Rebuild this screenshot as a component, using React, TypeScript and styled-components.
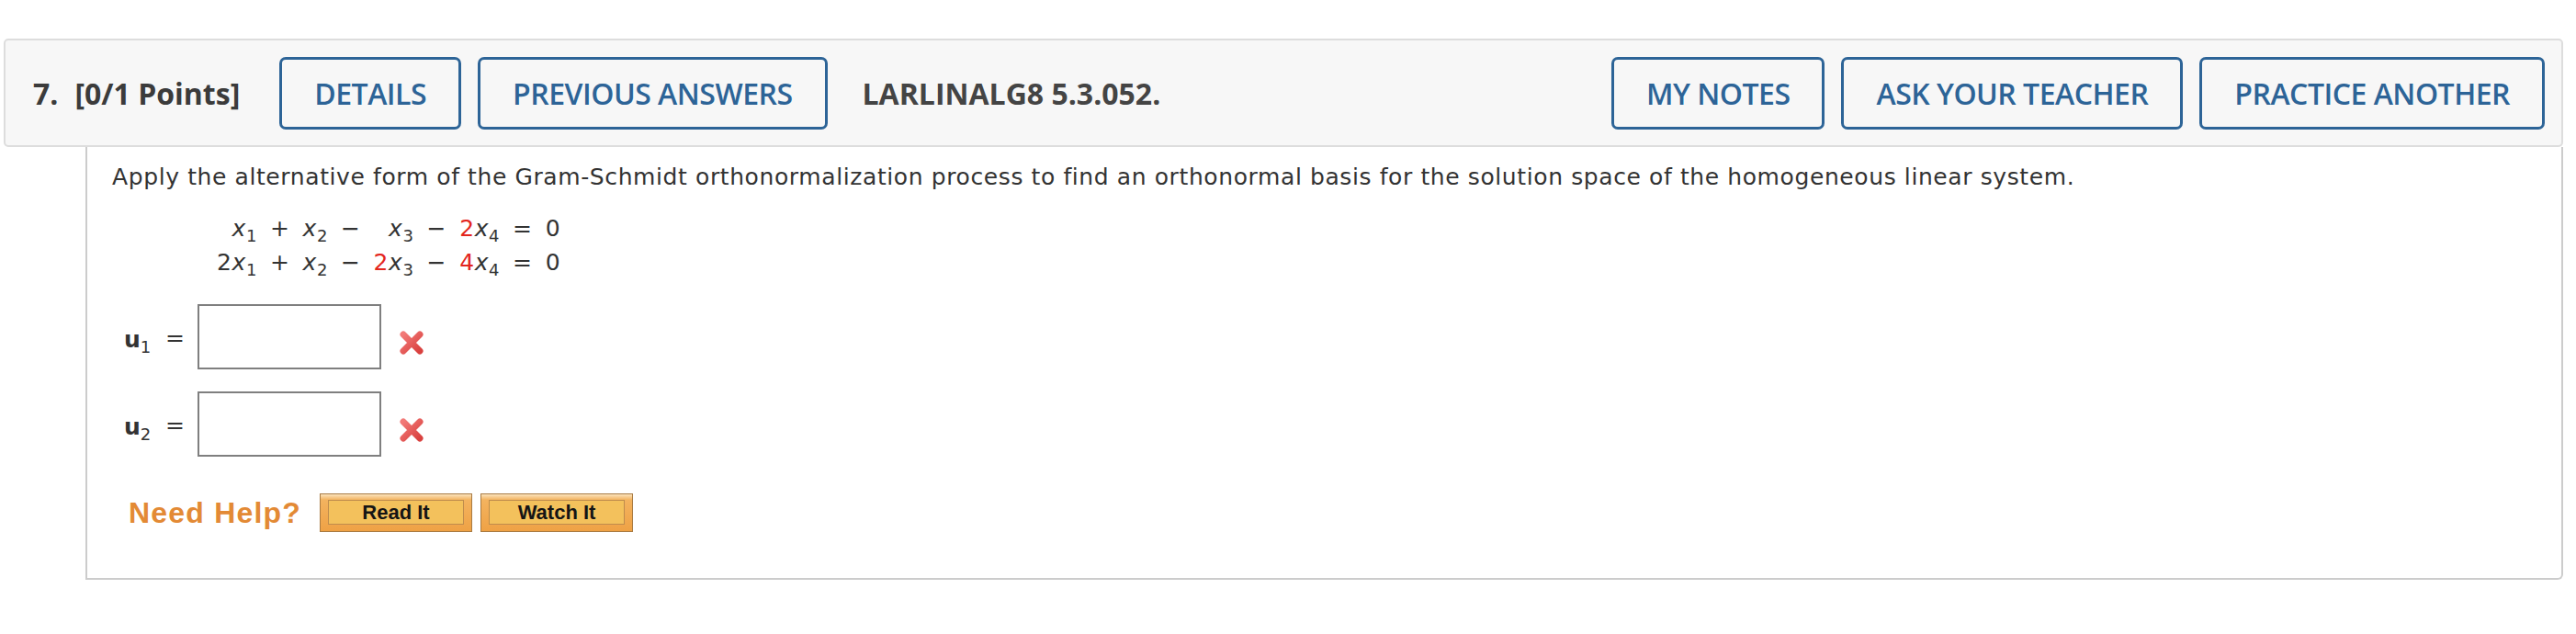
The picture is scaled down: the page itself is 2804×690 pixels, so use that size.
import styled, { createGlobalStyle } from "styled-components";

const GlobalStyle = createGlobalStyle`
  html, body {
    margin: 0;
    padding: 0;
    background: #ffffff;
  }
  body {
    font-family: "DejaVu Sans", Verdana, sans-serif;
    color: #333333;
  }
`;

const Question = styled.section`
  margin: 42px 14px 0 4px;
  display: flex;
  flex-direction: column;
`;

const Header = styled.header`
  box-sizing: border-box;
  height: 118px;
  display: flex;
  align-items: center;
  gap: 18px;
  padding: 0 18px 0 30px;
  background: #f7f7f7;
  border: 2px solid #dddddd;
  border-radius: 5px;
  font-family: "Open Sans", "Liberation Sans", sans-serif;
`;

const Title = styled.div`
  display: flex;
  align-items: center;
  gap: 18px;
  margin-right: 25px;
  font-size: 32px;
  font-weight: 700;
  color: #3b3b3b;
  white-space: nowrap;
`;

const HeaderButton = styled.button`
  box-sizing: border-box;
  height: 79px;
  padding: 0 35px;
  background: transparent;
  border: 3px solid #2d6497;
  border-radius: 7px;
  color: #2d6497;
  font-family: "Open Sans", "Liberation Sans", sans-serif;
  font-size: 32px;
  font-weight: 600;
  letter-spacing: -0.5px;
  white-space: nowrap;
  cursor: pointer;
`;

const Code = styled.div`
  margin-left: 20px;
  font-size: 32px;
  font-weight: 700;
  color: #444444;
  white-space: nowrap;
`;

const Spacer = styled.div`
  flex: 1;
`;

const Body = styled.div`
  margin-left: 89px;
  padding: 16px 0 50px 27px;
  border: 2px solid #cccccc;
  border-top: none;
  border-radius: 0 0 6px 0;
  font-size: 25px;
  letter-spacing: 0.6px;
  color: #333333;
`;

const Prompt = styled.p`
  margin: 0;
  line-height: 34px;
`;

const System = styled.div`
  display: grid;
  grid-template-columns: repeat(9, auto);
  justify-content: start;
  justify-items: end;
  column-gap: 14px;
  margin: 20px 0 0 114px;
  line-height: 37px;
  white-space: nowrap;
`;

const Term = styled.span``;

const Op = styled.span`
  justify-self: center;
`;

const Var = styled.i`
  font-style: italic;
`;

const Sub = styled.sub`
  font-size: 0.72em;
  vertical-align: -0.32em;
  line-height: 0;
  font-style: normal;
`;

const Coef = styled.span<{ $red?: boolean }>`
  color: ${(p) => (p.$red ? "#e3261d" : "inherit")};
`;

const AnswerRow = styled.div<{ $first?: boolean }>`
  display: flex;
  align-items: center;
  margin-top: ${(p) => (p.$first ? "27px" : "24px")};
  padding-left: 13px;
`;

const Label = styled.span`
  width: 30px;
  margin-top: 5px;
  font-weight: 700;
  letter-spacing: 0;
  white-space: nowrap;
  sub {
    font-weight: 400;
  }
`;

const Equals = styled.span`
  margin: 2px 13px 0 15px;
`;

const AnswerBox = styled.input`
  box-sizing: border-box;
  width: 200px;
  height: 71px;
  margin: 0;
  border: 2px solid #7f7f7f;
  border-radius: 0;
  background: #ffffff;
  outline: none;
`;

const Mark = styled.svg`
  width: 28px;
  height: 28px;
  margin: 12px 0 0 19px;
`;

const HelpRow = styled.div`
  display: flex;
  align-items: center;
  margin-top: 40px;
  padding-left: 18px;
`;

const NeedHelp = styled.span`
  margin-right: 20px;
  font-family: "Liberation Sans", Arial, sans-serif;
  font-size: 32px;
  font-weight: 700;
  color: #e38a35;
  letter-spacing: 1.2px;
`;

const HelpButton = styled.button`
  box-sizing: border-box;
  width: 166px;
  height: 42px;
  margin-right: 9px;
  padding: 6px 8px 7px;
  display: flex;
  background: linear-gradient(#fbe3bd 0px, #f3b35f 6px, #efa245 100%);
  border: 1px solid #a87a42;
  cursor: pointer;
`;

const HelpLabel = styled.span`
  flex: 1;
  display: flex;
  align-items: center;
  justify-content: center;
  background: #f3c15c;
  border: 1px solid #bf8c4d;
  font-family: "Liberation Sans", Arial, sans-serif;
  font-size: 22px;
  font-weight: 700;
  color: #151515;
  letter-spacing: 0;
`;

const WrongMark = () => (
  <Mark viewBox="0 0 28 28">
    <defs>
      <linearGradient id="xg" x1="0" y1="0" x2="1" y2="1">
        <stop offset="0" stopColor="#f27a78" />
        <stop offset="1" stopColor="#d9413f" />
      </linearGradient>
    </defs>
    <path
      d="M5 5 L23 23 M23 5 L5 23"
      stroke="url(#xg)"
      strokeWidth="7"
      strokeLinecap="round"
    />
  </Mark>
);

const X = ({ n }: { n: number }) => (
  <>
    <Var>x</Var>
    <Sub>{n}</Sub>
  </>
);

const headerLeft = ["DETAILS", "PREVIOUS ANSWERS"];
const headerRight = ["MY NOTES", "ASK YOUR TEACHER", "PRACTICE ANOTHER"];

export default function App() {
  return (
    <>
      <GlobalStyle />
      <Question>
        <Header>
          <Title>
            <span>7.</span>
            <span>[0/1 Points]</span>
          </Title>
          {headerLeft.map((label) => (
            <HeaderButton key={label}>{label}</HeaderButton>
          ))}
          <Code>LARLINALG8 5.3.052.</Code>
          <Spacer />
          {headerRight.map((label) => (
            <HeaderButton key={label}>{label}</HeaderButton>
          ))}
        </Header>

        <Body>
          <Prompt>
            Apply the alternative form of the Gram-Schmidt orthonormalization
            process to find an orthonormal basis for the solution space of the
            homogeneous linear system.
          </Prompt>

          <System>
            <Term>
              <X n={1} />
            </Term>
            <Op>+</Op>
            <Term>
              <X n={2} />
            </Term>
            <Op>−</Op>
            <Term>
              <X n={3} />
            </Term>
            <Op>−</Op>
            <Term>
              <Coef $red>2</Coef>
              <X n={4} />
            </Term>
            <Op>=</Op>
            <Term>0</Term>

            <Term>
              <Coef>2</Coef>
              <X n={1} />
            </Term>
            <Op>+</Op>
            <Term>
              <X n={2} />
            </Term>
            <Op>−</Op>
            <Term>
              <Coef $red>2</Coef>
              <X n={3} />
            </Term>
            <Op>−</Op>
            <Term>
              <Coef $red>4</Coef>
              <X n={4} />
            </Term>
            <Op>=</Op>
            <Term>0</Term>
          </System>

          {[1, 2].map((n) => (
            <AnswerRow key={n} $first={n === 1}>
              <Label>
                u<Sub>{n}</Sub>
              </Label>
              <Equals>=</Equals>
              <AnswerBox type="text" aria-label={`u${n}`} />
              <WrongMark />
            </AnswerRow>
          ))}

          <HelpRow>
            <NeedHelp>Need Help?</NeedHelp>
            <HelpButton>
              <HelpLabel>Read It</HelpLabel>
            </HelpButton>
            <HelpButton>
              <HelpLabel>Watch It</HelpLabel>
            </HelpButton>
          </HelpRow>
        </Body>
      </Question>
    </>
  );
}
